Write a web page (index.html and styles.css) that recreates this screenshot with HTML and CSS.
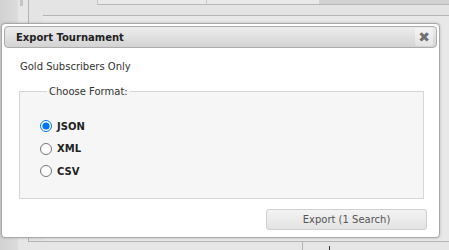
FILE: index.html
```html
<!DOCTYPE html>
<html lang="en">
<head>
    <meta charset="UTF-8">
    <title>Export Tournament</title>
    <link rel="stylesheet" href="styles.css">
</head>
<body>
    <div class="page">
        <div class="side"></div>
        <div class="gutter"><div class="thumb"></div></div>
        <div class="main">
            <div class="toolbar">
                <div class="tb-blank"></div>
                <div class="tb-box"></div>
                <div class="tb-box tb-last"></div>
                <div class="tb-dark"></div>
            </div>
            <div class="panel">
                <div class="panel-left"></div>
                <div class="panel-right">
                    <div class="col-head">li</div>
                    <div class="col-row"></div>
                    <div class="col-row"></div>
                    <div class="col-row"></div>
                    <div class="col-row"></div>
                    <div class="col-row"></div>
                    <div class="col-row"></div>
                    <div class="col-row"></div>
                    <div class="col-row"></div>
                    <div class="col-row"></div>
                </div>
            </div>
            <div class="footer-row">
                <div class="foot-cell"></div>
                <div class="foot-cell foot-right"><span class="foot-mark"></span></div>
            </div>
        </div>
    </div>

    <div class="dialog">
        <div class="dialog-title">
            <span>Export Tournament</span>
            <button class="dialog-close">&#10006;</button>
        </div>
        <div class="dialog-body">
            <p class="note">Gold Subscribers Only</p>
            <fieldset class="format-box">
                <legend>Choose Format:</legend>
                <label class="format-choice"><input type="radio" name="format" value="json" checked> JSON</label>
                <label class="format-choice"><input type="radio" name="format" value="xml"> XML</label>
                <label class="format-choice"><input type="radio" name="format" value="csv"> CSV</label>
            </fieldset>
            <div class="dialog-buttons">
                <button class="export-button">Export (1 Search)</button>
            </div>
        </div>
    </div>
</body>
</html>
```

FILE: styles.css
```css
body {
    margin: 0;
    font-family: "DejaVu Sans", Verdana, sans-serif;
    font-size: 10px;
    color: #333;
    background-color: #e4e4e4;
    overflow: hidden;
}
.page {
    display: flex;
    height: 250px;
}
.side {
    width: 18px;
    flex-shrink: 0;
    background: linear-gradient(to right, #d2d2d2, #dcdcdc);
}
.gutter {
    width: 10px;
    flex-shrink: 0;
    border-right: 1px solid #b4b4b4;
    background-color: #e6e6e6;
}
.thumb {
    width: 3px;
    height: 6px;
    margin-left: 2px;
    background-color: #c4c4c4;
}
.main {
    flex: 1;
    display: flex;
    flex-direction: column;
}
.toolbar {
    display: flex;
    height: 5px;
}
.tb-blank {
    width: 68px;
}
.tb-box {
    width: 108px;
    background-color: #e9e9e9;
    border-left: 1px solid #c8c8c8;
    border-bottom: 1px solid #b8b8b8;
}
.tb-last {
    width: 112px;
}
.tb-dark {
    flex: 1;
    background-color: #d2d2d2;
    border-bottom: 1px solid #b8b8b8;
}
.panel {
    display: flex;
    flex: 1;
    margin-top: 10px;
    margin-left: 14px;
    border-top: 1px solid #b4b4b4;
    background-color: #e8e8e8;
}
.panel-left {
    flex: 1;
}
.panel-right {
    width: 8px;
    border-left: 1px solid #bcbcbc;
    overflow: hidden;
}
.col-head {
    height: 22px;
    padding-top: 4px;
    box-sizing: border-box;
    font-size: 9px;
    color: #222;
}
.col-row {
    height: 20px;
    border-bottom: 1px solid #c4c4c4;
}
.footer-row {
    display: flex;
    height: 8px;
    margin-left: -1px;
    border-top: 1px solid #b4b4b4;
    background-color: #e6e6e6;
}
.foot-cell {
    width: 274px;
    flex-shrink: 0;
    border-right: 1px solid #b4b4b4;
}
.foot-right {
    flex: 1;
    border-right: none;
    padding: 4px 0 0 26px;
}
.foot-mark {
    display: block;
    width: 1px;
    height: 4px;
    background-color: #333;
}
.dialog {
    position: absolute;
    left: 1px;
    top: 23px;
    width: 433px;
    height: 209px;
    padding: 2px;
    background-color: #fff;
    border: 1px solid #a8a8a8;
    border-radius: 4px;
    box-shadow: 0 0 3px rgba(0, 0, 0, 0.2);
}
.dialog-title {
    display: flex;
    justify-content: space-between;
    align-items: center;
    height: 20px;
    padding: 0 3px 0 11px;
    border: 1px solid #acacac;
    border-radius: 4px;
    background: linear-gradient(#ededed, #d3d3d3);
    font-weight: bold;
    color: #222;
}
.dialog-close {
    width: 18px;
    height: 18px;
    padding: 0;
    border: none;
    border-radius: 3px;
    background: linear-gradient(#f4f4f4, #e4e4e4);
    color: #707070;
    font-family: "DejaVu Sans", sans-serif;
    font-size: 14px;
    line-height: 18px;
    cursor: pointer;
}
.dialog-body {
    padding: 0 0 0 16px;
}
.note {
    margin: 13px 0 14px 0;
    color: #333;
}
.format-box {
    height: 93px;
    margin: 0 13px 0 -1px;
    padding: 18px 0 0 20px;
    border: 1px solid #d6d6d6;
    background-color: #f6f6f6;
}
.format-box legend {
    padding: 0 2px;
    margin-left: 7px;
    color: #333;
}
.format-choice {
    display: flex;
    align-items: center;
    height: 22.5px;
    font-weight: bold;
    color: #222;
}
.format-choice input {
    width: 12px;
    height: 12px;
    margin: 0 5px 0 0;
}
.dialog-buttons {
    display: flex;
    justify-content: flex-end;
    margin-top: 10px;
    padding-right: 10px;
}
.export-button {
    width: 161px;
    height: 21px;
    border: 1px solid #cfcfcf;
    border-radius: 3px;
    background: linear-gradient(#f3f3f3, #e3e3e3);
    font-family: "DejaVu Sans", Verdana, sans-serif;
    font-size: 10px;
    color: #555;
    cursor: pointer;
}
```
